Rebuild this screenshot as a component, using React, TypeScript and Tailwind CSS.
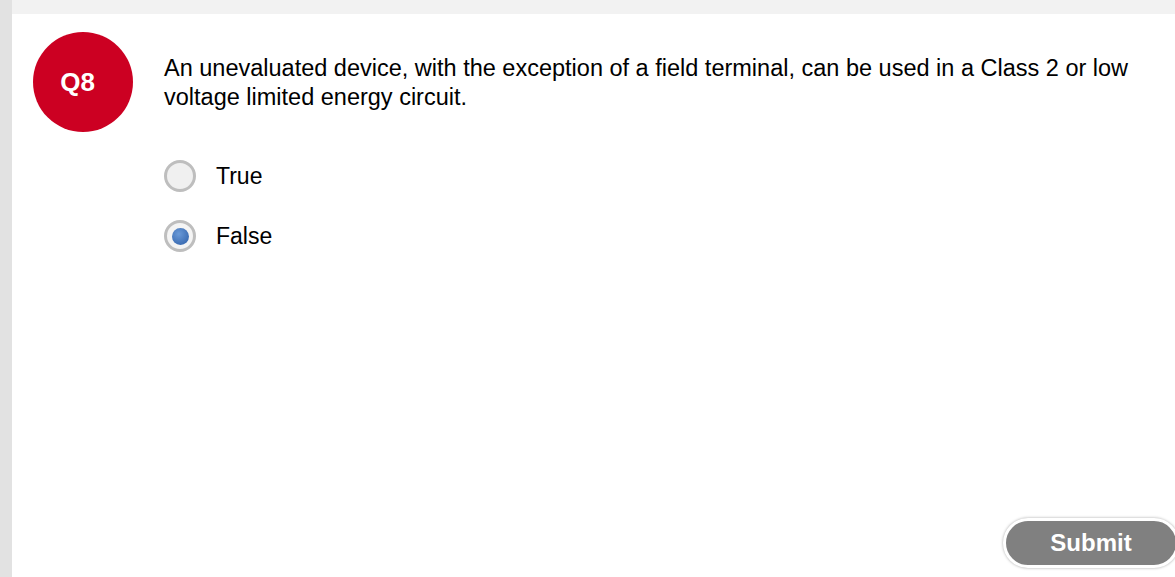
export default function App() {
  return (
    <div
      className="flex h-[577px] w-[1175px] overflow-hidden bg-[#e4e4e4]"
      style={{ fontFamily: '"Liberation Sans", Arial, sans-serif' }}
    >
      <div className="w-[12px] shrink-0 bg-[#e2e2e2]" />
      <div className="flex flex-1 flex-col bg-white">
        <div className="h-[14px] bg-[#f2f2f2]" />
        <div className="relative flex flex-1 flex-col">
          <div className="flex pl-[21px] pt-[18px]">
            <div className="flex h-[100px] w-[100px] shrink-0 items-center justify-center rounded-full bg-[#cc0022] pr-[11px]">
              <span className="text-[26px] font-bold text-white">Q8</span>
            </div>
            <div className="pl-[31px] pt-[22px]">
              <p className="pr-[30px] text-[23.5px] leading-[29px] text-black">
                An unevaluated device, with the exception of a field terminal, can be used in a Class 2 or low voltage limited energy circuit.
              </p>
              <div className="mt-[48px] flex flex-col gap-[28px]">
                <label className="flex h-[32px] items-center gap-[20px]">
                  <span className="h-[32px] w-[32px] rounded-full border-[3px] border-[#bebebe] bg-[#f0f0f0]" />
                  <span className="text-[23px] leading-none text-black">True</span>
                </label>
                <label className="flex h-[32px] items-center gap-[20px]">
                  <span className="flex h-[32px] w-[32px] items-center justify-center rounded-full border-[3px] border-[#bebebe] bg-[#f4f4f4]">
                    <span className="h-[17px] w-[17px] rounded-full bg-[radial-gradient(circle_at_40%_35%,#6a9ad8,#2c5da6)]" />
                  </span>
                  <span className="text-[23px] leading-none text-black">False</span>
                </label>
              </div>
            </div>
          </div>
          <div className="mt-auto flex justify-end pb-[9px]">
            <button className="-mr-[4px] flex h-[50px] w-[176px] items-center justify-center rounded-full border-[3px] border-white bg-[#808080] text-[24px] font-bold text-white shadow-[0_0_3px_rgba(0,0,0,0.35)]">
              Submit
            </button>
          </div>
        </div>
      </div>
    </div>
  );
}
